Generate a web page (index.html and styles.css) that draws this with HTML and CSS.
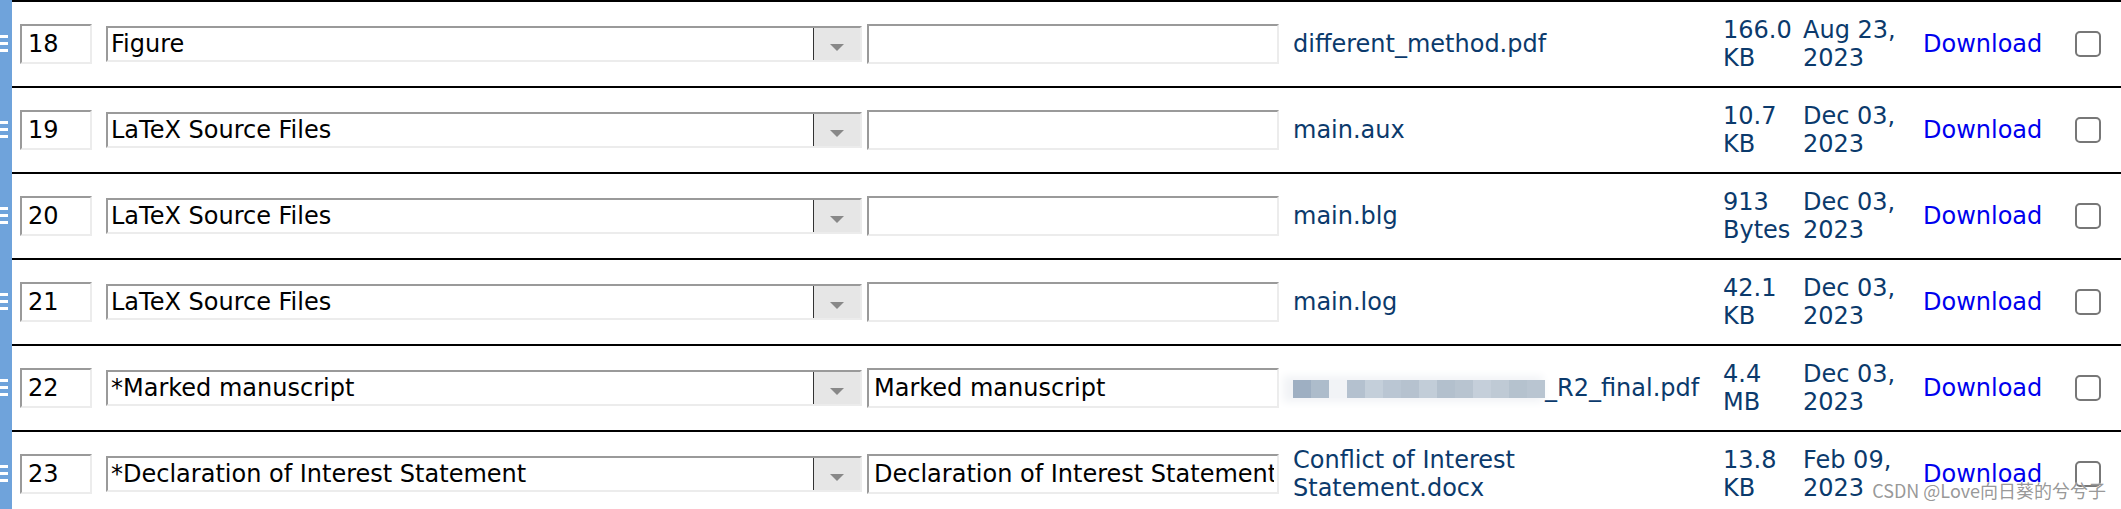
FILE: index.html
```html
<!DOCTYPE html>
<html lang="en">
<head>
<meta charset="utf-8">
<title>Files</title>
<link rel="stylesheet" href="styles.css">
</head>
<body>
<div class="page">
  <div class="table">
    <div class="row">
      <div class="handle"><span></span><span></span><span></span></div>
      <div class="cell-num"><input class="num" type="text" value="18"></div>
      <div class="cell-sel"><div class="select"><span class="sel-val">Figure</span><span class="sel-btn"></span></div></div>
      <div class="cell-desc"><input class="desc" type="text" value=""></div>
      <div class="cell-file"><a class="file">different_method.pdf</a></div>
      <div class="cell-size">166.0 KB</div>
      <div class="cell-date">Aug 23, 2023</div>
      <div class="cell-dl"><a class="dl">Download</a></div>
      <div class="cell-chk"><input class="chk" type="checkbox"></div>
    </div>
    <div class="row">
      <div class="handle"><span></span><span></span><span></span></div>
      <div class="cell-num"><input class="num" type="text" value="19"></div>
      <div class="cell-sel"><div class="select"><span class="sel-val">LaTeX Source Files</span><span class="sel-btn"></span></div></div>
      <div class="cell-desc"><input class="desc" type="text" value=""></div>
      <div class="cell-file"><a class="file">main.aux</a></div>
      <div class="cell-size">10.7 KB</div>
      <div class="cell-date">Dec 03, 2023</div>
      <div class="cell-dl"><a class="dl">Download</a></div>
      <div class="cell-chk"><input class="chk" type="checkbox"></div>
    </div>
    <div class="row">
      <div class="handle"><span></span><span></span><span></span></div>
      <div class="cell-num"><input class="num" type="text" value="20"></div>
      <div class="cell-sel"><div class="select"><span class="sel-val">LaTeX Source Files</span><span class="sel-btn"></span></div></div>
      <div class="cell-desc"><input class="desc" type="text" value=""></div>
      <div class="cell-file"><a class="file">main.blg</a></div>
      <div class="cell-size">913 Bytes</div>
      <div class="cell-date">Dec 03, 2023</div>
      <div class="cell-dl"><a class="dl">Download</a></div>
      <div class="cell-chk"><input class="chk" type="checkbox"></div>
    </div>
    <div class="row">
      <div class="handle"><span></span><span></span><span></span></div>
      <div class="cell-num"><input class="num" type="text" value="21"></div>
      <div class="cell-sel"><div class="select"><span class="sel-val">LaTeX Source Files</span><span class="sel-btn"></span></div></div>
      <div class="cell-desc"><input class="desc" type="text" value=""></div>
      <div class="cell-file"><a class="file">main.log</a></div>
      <div class="cell-size">42.1 KB</div>
      <div class="cell-date">Dec 03, 2023</div>
      <div class="cell-dl"><a class="dl">Download</a></div>
      <div class="cell-chk"><input class="chk" type="checkbox"></div>
    </div>
    <div class="row">
      <div class="handle"><span></span><span></span><span></span></div>
      <div class="cell-num"><input class="num" type="text" value="22"></div>
      <div class="cell-sel"><div class="select"><span class="sel-val">*Marked manuscript</span><span class="sel-btn"></span></div></div>
      <div class="cell-desc"><input class="desc" type="text" value="Marked manuscript"></div>
      <div class="cell-file"><a class="file"><span class="blur"><i class="b1"></i><i class="b2"></i><i class="b3"></i><i class="b4"></i><i class="b5"></i><i class="b6"></i><i class="b7"></i><i class="b8"></i><i class="b9"></i><i class="b10"></i><i class="b11"></i><i class="b12"></i><i class="b13"></i><i class="b14"></i></span>_R2_final.pdf</a></div>
      <div class="cell-size">4.4 MB</div>
      <div class="cell-date">Dec 03, 2023</div>
      <div class="cell-dl"><a class="dl">Download</a></div>
      <div class="cell-chk"><input class="chk" type="checkbox"></div>
    </div>
    <div class="row">
      <div class="handle"><span></span><span></span><span></span></div>
      <div class="cell-num"><input class="num" type="text" value="23"></div>
      <div class="cell-sel"><div class="select"><span class="sel-val">*Declaration of Interest Statement</span><span class="sel-btn"></span></div></div>
      <div class="cell-desc"><input class="desc" type="text" value="Declaration of Interest Statement"></div>
      <div class="cell-file"><a class="file">Conflict of Interest<br>Statement.docx</a></div>
      <div class="cell-size">13.8 KB</div>
      <div class="cell-date">Feb 09, 2023</div>
      <div class="cell-dl"><a class="dl">Download</a></div>
      <div class="cell-chk"><input class="chk" type="checkbox"></div>
    </div>
  </div>
  <div class="watermark">CSDN @Love向日葵的兮兮子</div>
</div>
</body>
</html>
```

FILE: styles.css
```css
html, body {
  margin: 0;
  padding: 0;
  background: #fff;
}
body {
  width: 2121px;
  height: 509px;
  overflow: hidden;
  font-family: "DejaVu Sans", Verdana, sans-serif;
  font-size: 24px;
  line-height: 28px;
  color: #000;
}
.page {
  position: relative;
  width: 2121px;
  height: 509px;
  overflow: hidden;
}
.row {
  display: grid;
  grid-template-columns: 12px 80px 770px 417px 444px 80px 120px 152px 26px 1fr;
  align-items: center;
  border-top: 2px solid #000;
  height: 84px;
}
.handle {
  align-self: stretch;
  margin-top: -2px;
  background: #6fa3db;
  display: flex;
  flex-direction: column;
  justify-content: center;
  align-items: flex-start;
  gap: 4px;
}
.handle span {
  display: block;
  width: 8px;
  height: 3px;
  background: #fff;
}
.cell-num, .cell-sel, .cell-desc {
  display: flex;
  justify-content: flex-end;
}
.num, .desc {
  box-sizing: border-box;
  height: 40px;
  margin: 0;
  border: 2px solid;
  border-color: #9a9a9a #ececec #ececec #9a9a9a;
  font-family: "DejaVu Sans", Verdana, sans-serif;
  font-size: 24px;
  color: #000;
  background: #fff;
  outline: none;
}
.num {
  width: 72px;
  padding: 0 6px;
}
.desc {
  width: 412px;
  padding: 0 3px 0 5px;
}
.select {
  box-sizing: border-box;
  width: 756px;
  height: 36px;
  display: flex;
  border: 2px solid;
  border-color: #9a9a9a #ececec #ececec #9a9a9a;
  background: #fff;
}
.sel-val {
  flex: 1;
  padding-left: 3px;
  line-height: 32px;
  white-space: nowrap;
  overflow: hidden;
}
.sel-btn {
  width: 46px;
  border-left: 1px solid #333;
  background: #e6e6e6;
  display: flex;
  align-items: center;
  justify-content: center;
}
.sel-btn::after {
  content: "";
  display: block;
  width: 0;
  height: 0;
  margin-top: 6px;
  border-left: 7px solid transparent;
  border-right: 7px solid transparent;
  border-top: 7px solid #888;
}
.cell-file {
  padding-left: 14px;
  white-space: nowrap;
}
.file, .cell-size, .cell-date {
  color: #0b3a6c;
}
.blur {
  display: inline-flex;
  vertical-align: -2px;
  box-shadow: -6px 0 8px 4px #f1f3f6;
}
.blur i {
  display: block;
  width: 18px;
  height: 18px;
}
.b1 { background: #9eafc2; }
.b2 { background: #adbccb; }
.b3 { background: #f1f3f6; }
.b4 { background: #b4c1cf; }
.b5 { background: #c4cfda; }
.b6 { background: #bac6d3; }
.b7 { background: #b6c2cf; }
.b8 { background: #c2cdd8; }
.b9 { background: #b3c0cd; }
.b10 { background: #b8c4d0; }
.b11 { background: #c5cfda; }
.b12 { background: #bfcad5; }
.b13 { background: #b5c2ce; }
.b14 { background: #b9c5d1; }
.dl {
  color: #0000ee;
}
.chk {
  appearance: none;
  -webkit-appearance: none;
  box-sizing: border-box;
  width: 26px;
  height: 26px;
  margin: 0;
  border: 2px solid #777;
  border-radius: 5px;
  background: #fff;
  display: block;
}
.watermark {
  position: absolute;
  right: 15px;
  bottom: 8px;
  font-family: "Noto Sans CJK SC", "DejaVu Sans", sans-serif;
  font-size: 18px;
  line-height: 22px;
  color: rgba(125, 125, 125, 0.8);
  text-shadow: 0 0 1px #fff;
}
```
